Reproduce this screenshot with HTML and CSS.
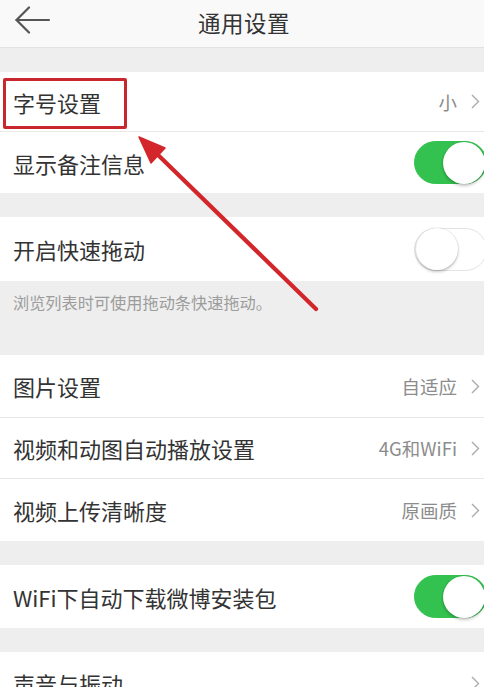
FILE: index.html
```html
<!DOCTYPE html>
<html lang="zh-CN">
<head>
<meta charset="utf-8">
<title>通用设置</title>
<link rel="stylesheet" href="styles.css">
</head>
<body>
<div class="page">
  <header class="topbar">
    <svg class="back" width="36" height="28" viewBox="0 0 36 28">
      <polyline points="14,1.5 1.5,14 14,26.5" fill="none" stroke="#555" stroke-width="2.2" stroke-linecap="round" stroke-linejoin="round"/>
      <line x1="1.5" y1="14" x2="34" y2="14" stroke="#555" stroke-width="2.2" stroke-linecap="round"/>
    </svg>
    <h1 class="title">通用设置</h1>
  </header>

  <div class="gap"></div>
  <section class="group">
    <div class="row h59"><span class="label">字号设置</span><span class="value">小</span><svg class="chev" width="9" height="15" viewBox="0 0 9 15"><polyline points="1,1 7.5,7.5 1,14" fill="none" stroke="#aaa" stroke-width="1.4"/></svg></div>
    <div class="row h62 sep"><span class="label">显示备注信息</span><span class="switch on"><span class="knob"></span></span></div>
  </section>

  <div class="gap"></div>
  <section class="group">
    <div class="row h64"><span class="label">开启快速拖动</span><span class="switch"><span class="knob"></span></span></div>
  </section>
  <div class="note">浏览列表时可使用拖动条快速拖动。</div>

  <section class="group">
    <div class="row h62"><span class="label">图片设置</span><span class="value">自适应</span><svg class="chev" width="9" height="15" viewBox="0 0 9 15"><polyline points="1,1 7.5,7.5 1,14" fill="none" stroke="#aaa" stroke-width="1.4"/></svg></div>
    <div class="row h61 sep"><span class="label">视频和动图自动播放设置</span><span class="value">4G和WiFi</span><svg class="chev" width="9" height="15" viewBox="0 0 9 15"><polyline points="1,1 7.5,7.5 1,14" fill="none" stroke="#aaa" stroke-width="1.4"/></svg></div>
    <div class="row h63 sep"><span class="label">视频上传清晰度</span><span class="value">原画质</span><svg class="chev" width="9" height="15" viewBox="0 0 9 15"><polyline points="1,1 7.5,7.5 1,14" fill="none" stroke="#aaa" stroke-width="1.4"/></svg></div>
  </section>

  <div class="gap"></div>
  <section class="group">
    <div class="row h63"><span class="label">WiFi下自动下载微博安装包</span><span class="switch on"><span class="knob"></span></span></div>
  </section>

  <div class="gap"></div>
  <section class="group">
    <div class="row h62"><span class="label">声音与振动</span><svg class="chev" width="9" height="15" viewBox="0 0 9 15"><polyline points="1,1 7.5,7.5 1,14" fill="none" stroke="#aaa" stroke-width="1.4"/></svg></div>
  </section>

  <div class="highlight"></div>
  <svg class="pointer" width="484" height="687" viewBox="0 0 484 687">
    <line x1="316" y1="309" x2="156" y2="153" stroke="#d3262b" stroke-width="4.2" stroke-linecap="round"/>
    <polygon points="139,137 165,148 151,163" fill="#d3262b" stroke="#d3262b" stroke-width="1.5" stroke-linejoin="round"/>
  </svg>
</div>
</body>
</html>
```

FILE: styles.css
```css
* { box-sizing: border-box; }
html, body { margin: 0; padding: 0; }
body {
  background: #eeeeee;
  font-family: "Noto Sans CJK SC", "Noto Sans", sans-serif;
  color: #333;
  overflow: hidden;
}
.page {
  position: relative;
  width: 484px;
  height: 687px;
  overflow: hidden;
  background: #eeeeee;
}
.topbar {
  height: 48px;
  background: #f9f9f9;
  border-bottom: 1px solid #e2e2e2;
  display: flex;
  align-items: center;
  justify-content: center;
  position: relative;
}
.back {
  position: absolute;
  left: 15px;
  top: 6px;
}
.title {
  margin: 0 0 4px 4px;
  font-size: 22.5px;
  font-weight: normal;
  color: #333;
  letter-spacing: 0.5px;
}
.gap { height: 24px; }
.group { background: #fff; }
.row {
  display: flex;
  align-items: center;
  padding: 0 0 0 13px;
  background: #fff;
}
.row.sep { border-top: 1px solid #e8e8e8; }
.h59 { height: 59px; }
.h61 { height: 61px; }
.h62 { height: 62px; }
.h63 { height: 63px; }
.h64 { height: 64px; }
.label {
  flex: 1;
  font-size: 22px;
  color: #333;
  white-space: nowrap;
}
.value {
  font-size: 18.5px;
  color: #8c8c8c;
  margin-right: 14px;
}
.chev {
  margin-right: 4px;
  flex: none;
}
.switch {
  flex: none;
  width: 73px;
  height: 43px;
  border-radius: 22px;
  background: #fff;
  border: 1.5px solid #e3e3e3;
  margin-right: -3px;
  position: relative;
  display: flex;
  align-items: center;
  padding: 0 1px;
}
.switch .knob {
  width: 42px;
  height: 42px;
  border-radius: 50%;
  background: #fff;
  box-shadow: 0 2px 3px rgba(0,0,0,0.22), 0 0 0 1px rgba(0,0,0,0.06);
}
.switch.on {
  background: #33c14f;
  border-color: #33c14f;
  justify-content: flex-end;
}
.note {
  height: 74px;
  padding: 7px 0 0 13px;
  font-size: 16.2px;
  color: #9c9c9c;
  line-height: 28px;
}
.highlight {
  position: absolute;
  left: 3px;
  top: 78px;
  width: 124px;
  height: 51px;
  border: 3px solid #c8272d;
  border-radius: 2px;
}
.pointer {
  position: absolute;
  left: 0;
  top: 0;
  pointer-events: none;
}
```
